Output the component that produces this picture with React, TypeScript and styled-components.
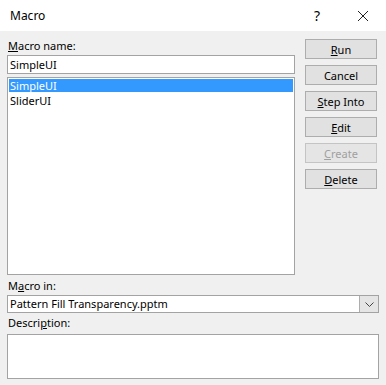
import styled, { createGlobalStyle } from "styled-components"

const GlobalStyle = createGlobalStyle`
    html, body {
        margin: 0;
        padding: 0;
        background: #f0f0f0;
    }
    * {
        box-sizing: border-box;
    }
`

const Window = styled.div`
    width: 386px;
    height: 385px;
    display: flex;
    flex-direction: column;
    font-family: "Noto Sans", "Liberation Sans", sans-serif;
    font-size: 11px;
    color: #000;
    overflow: hidden;
`

const TitleBar = styled.div`
    height: 31px;
    background: #fff;
    display: flex;
    align-items: center;
    padding-left: 10px;
    font-size: 12px;
`

const Title = styled.div`
    flex: 1;
`

const TitleBtn = styled.div`
    width: 46px;
    height: 31px;
    display: flex;
    align-items: center;
    justify-content: center;
    font-size: 14px;
`

const Body = styled.div`
    flex: 1;
    background: #f0f0f0;
    padding: 8px 7px 0 7px;
    display: flex;
    flex-direction: column;
`

const Top = styled.div`
    display: flex;
    gap: 10px;
`

const LeftCol = styled.div`
    width: 288px;
    display: flex;
    flex-direction: column;
`

const Label = styled.div`
    height: 16px;
    line-height: 14px;
    padding-left: 1px;
`

const TextBox = styled.div<{ $h: number }>`
    height: ${p => p.$h}px;
    background: #fff;
    border: 1px solid #a3a3a3;
    padding: 0 2px;
    line-height: ${p => p.$h - 2}px;
    white-space: nowrap;
`

const List = styled.div`
    margin-top: 3px;
    height: 198px;
    background: #fff;
    border: 1px solid #a3a3a3;
    padding: 1px;
`

const ListItem = styled.div<{ $sel?: boolean }>`
    height: 13px;
    line-height: 13px;
    margin-bottom: 2px;
    padding-left: 1px;
    background: ${p => (p.$sel ? "#3399ff" : "transparent")};
    color: ${p => (p.$sel ? "#fff" : "#000")};
`

const ButtonCol = styled.div`
    display: flex;
    flex-direction: column;
    gap: 6px;
`

const Button = styled.div<{ $disabled?: boolean }>`
    width: 72px;
    height: 20px;
    display: flex;
    align-items: center;
    justify-content: center;
    background: ${p => (p.$disabled ? "#e5e5e5" : "#e1e1e1")};
    border: 1px solid ${p => (p.$disabled ? "#c4c4c4" : "#adadad")};
    color: ${p => (p.$disabled ? "#a0a0a0" : "#000")};
`

const Bottom = styled.div`
    width: 372px;
    display: flex;
    flex-direction: column;
    margin-top: 4px;
`

const Combo = styled.div`
    height: 18px;
    background: #fff;
    border: 1px solid #a3a3a3;
    display: flex;
    align-items: stretch;
    margin-bottom: 3px;
`

const ComboText = styled.div`
    flex: 1;
    padding-left: 2px;
    line-height: 16px;
    white-space: nowrap;
`

const DropBtn = styled.div`
    width: 19px;
    background: #e5e5e5;
    border-left: 1px solid #adadad;
    display: flex;
    align-items: center;
    justify-content: center;
`

const DescBox = styled.div`
    margin-top: 2px;
    height: 45px;
    background: #fff;
    border: 1px solid #a3a3a3;
`

const App: React.FC = () => {
    return (
        <Window>
            <GlobalStyle />
            <TitleBar>
                <Title>Macro</Title>
                <TitleBtn>?</TitleBtn>
                <TitleBtn>
                    <svg width="12" height="12" viewBox="0 0 12 12">
                        <path d="M1 1L11 11M11 1L1 11" stroke="#222" strokeWidth="1" fill="none" />
                    </svg>
                </TitleBtn>
            </TitleBar>
            <Body>
                <Top>
                    <LeftCol>
                        <Label><u>M</u>acro name:</Label>
                        <TextBox $h={19}>SimpleUI</TextBox>
                        <List>
                            <ListItem $sel>SimpleUI</ListItem>
                            <ListItem>SliderUI</ListItem>
                        </List>
                    </LeftCol>
                    <ButtonCol>
                        <Button><span><u>R</u>un</span></Button>
                        <Button>Cancel</Button>
                        <Button><span><u>S</u>tep Into</span></Button>
                        <Button><span><u>E</u>dit</span></Button>
                        <Button $disabled><span><u>C</u>reate</span></Button>
                        <Button><span><u>D</u>elete</span></Button>
                    </ButtonCol>
                </Top>
                <Bottom>
                    <Label>M<u>a</u>cro in:</Label>
                    <Combo>
                        <ComboText>Pattern Fill Transparency.pptm</ComboText>
                        <DropBtn>
                            <svg width="9" height="5" viewBox="0 0 9 5">
                                <path d="M0.5 0.5L4.5 4.5L8.5 0.5" stroke="#444" strokeWidth="1" fill="none" />
                            </svg>
                        </DropBtn>
                    </Combo>
                    <Label>Descri<u>p</u>tion:</Label>
                    <DescBox />
                </Bottom>
            </Body>
        </Window>
    )
}

export default App
